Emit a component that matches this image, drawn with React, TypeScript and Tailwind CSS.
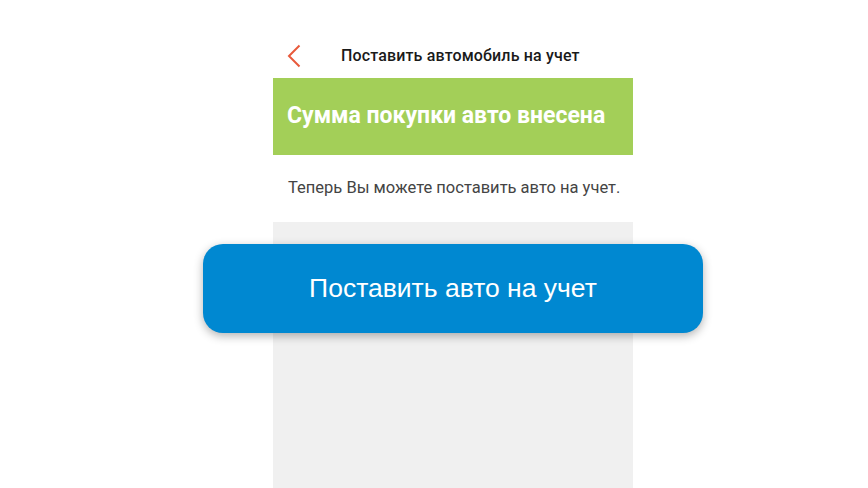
export default function App() {
  return (
    <div className="flex h-[488px] w-full overflow-hidden bg-white font-['Roboto',sans-serif]">
      <div className="relative ml-[273px] flex w-[360px] shrink-0 flex-col">
        <header className="flex h-[78px] items-center pt-[34px]">
          <button className="ml-[13px] flex h-[24px] w-[16px] items-center justify-center">
            <svg width="14" height="24" viewBox="0 0 14 24" fill="none">
              <path d="M12.5 1.5L2 12L12.5 22.5" stroke="#e85a3c" strokeWidth="2" />
            </svg>
          </button>
          <h1 className="ml-[39px] whitespace-nowrap text-[16px] font-medium tracking-[0.15px] text-[#1a1a1a]">
            Поставить автомобиль на учет
          </h1>
        </header>
        <div className="flex h-[77px] items-center bg-[#a3cf58] px-[14px]">
          <p className="whitespace-nowrap text-[23px] font-bold text-white">Сумма покупки авто внесена</p>
        </div>
        <p className="mt-[22px] whitespace-nowrap px-[15px] text-[16.5px] leading-[22px] text-[#444444]">
          Теперь Вы можете поставить авто на учет.
        </p>
        <div className="mt-[23px] flex-1 bg-[#f0f0f0]" />
        <button className="absolute left-[-70px] top-[244px] flex h-[89px] w-[500px] items-center justify-center rounded-[20px] bg-[#0088d1] font-['Liberation_Sans',sans-serif] text-[26.5px] text-white shadow-[0_3px_10px_rgba(0,0,0,0.3)]">
          Поставить авто на учет
        </button>
      </div>
    </div>
  );
}
